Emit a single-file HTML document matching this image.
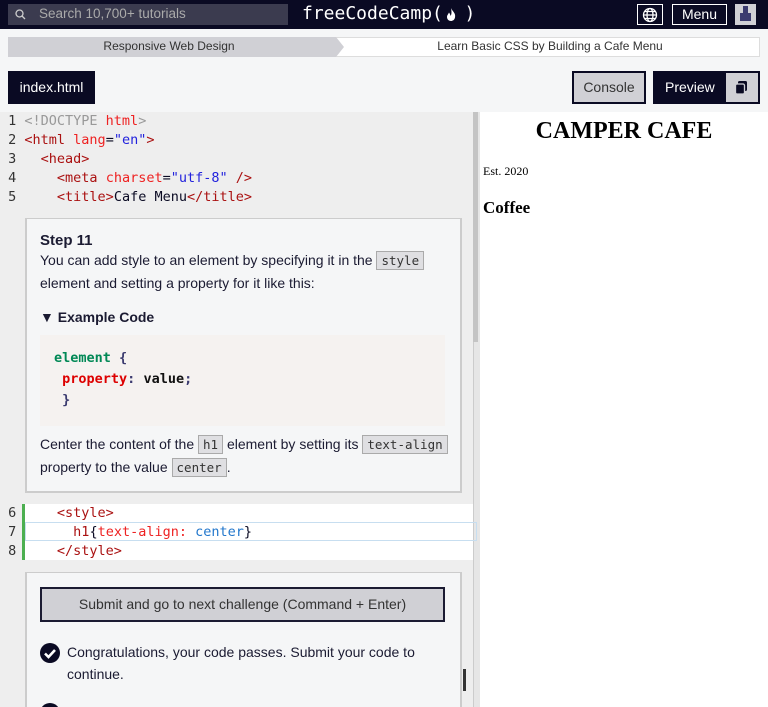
<!DOCTYPE html>
<html style="overflow:hidden;width:768px;height:707px"><head><meta charset="utf-8"><style>
*{box-sizing:border-box;margin:0;padding:0}
body{width:768px;height:707px;overflow:hidden;background:#f5f6f7;font-family:"Liberation Sans",sans-serif;position:relative;color:#0a0a23}
.a{position:absolute}
.mono{font-family:"DejaVu Sans Mono","Liberation Mono",monospace}
.hdr{left:0;top:0;width:768px;height:29px;background:#0a0a23}
.code{font-size:13.5px;line-height:19px;white-space:pre}
.ln{color:#333;}
.t{color:#a11}.at{color:#e22}.s{color:#22d}.g{color:#999}
.ic{font-family:"DejaVu Sans Mono",monospace;font-size:12.5px;background:#dfdfe2;border:1px solid #aaa;padding:1px 4px;color:#333}
.p{font-size:14px;line-height:22px;color:#1b1b32}
</style></head><body>
<div class="a hdr"></div>
<div class="a" style="left:8px;top:4px;width:280px;height:21px;background:#3b3b4f"></div>
<svg class="a" style="left:15px;top:9px" width="11" height="11" viewBox="0 0 11 11"><circle cx="4.5" cy="4.5" r="3.5" stroke="#ccc" stroke-width="1.3" fill="none"/><path d="M7 7l3 3" stroke="#ccc" stroke-width="1.3"/></svg>
<div class="a" style="left:39px;top:6px;font-size:13.5px;color:#aaa">Search 10,700+ tutorials</div>
<div class="a mono" style="left:302px;top:3px;font-size:18px;color:#fff;white-space:pre">freeCodeCamp(  )</div>
<svg class="a" style="left:445px;top:7px" width="12" height="15" viewBox="0 0 12 15"><path d="M6 1C7 4 11 6 10 10.5C9.5 13 7.5 14 6 14C4 14 2 12.5 2 10C2 8 3.5 7 4 5.5C5 7 5.5 8 5.5 9C7 7 6.5 4 6 1Z" fill="#fff"/></svg>
<div class="a" style="left:637px;top:4px;width:26px;height:21px;border:1px solid #fff"></div>
<svg class="a" style="left:642px;top:7px" width="16" height="16" viewBox="0 0 16 16" fill="none" stroke="#fff" stroke-width="1.3"><circle cx="8" cy="8" r="6.5"/><ellipse cx="8" cy="8" rx="3" ry="6.5"/><path d="M1.5 8h13M2.5 4.5h11M2.5 11.5h11"/></svg>
<div class="a" style="left:672px;top:4px;width:55px;height:21px;border:1px solid #fff;color:#fff;font-size:14px;text-align:center;line-height:19px">Menu</div>
<div class="a" style="left:735px;top:4px;width:21px;height:21px;background:#d0d0d5"></div>
<div class="a" style="left:740px;top:13px;width:11px;height:8px;background:#3b3b6f"></div>
<div class="a" style="left:743px;top:6px;width:5px;height:7px;background:#3b3b6f"></div>
<div class="a" style="left:8px;top:37px;width:752px;height:20px;background:#fff;border:1px solid #ddd"></div>
<svg class="a" style="left:8px;top:37px" width="336" height="20"><polygon points="0,0 328,0 336,10 328,20 0,20" fill="#d0d0d5"/></svg>
<div class="a" style="left:8px;top:39px;width:322px;text-align:center;font-size:12px;color:#333">Responsive Web Design</div>
<div class="a" style="left:340px;top:39px;width:420px;text-align:center;font-size:12px;color:#333">Learn Basic CSS by Building a Cafe Menu</div>
<div class="a" style="left:8px;top:71px;width:87px;height:33px;background:#0a0a23;color:#fff;font-size:14px;text-align:center;line-height:33px">index.html</div>
<div class="a" style="left:572px;top:71px;width:74px;height:33px;background:#d0d0d5;border:2px solid #0a0a23;font-size:14px;text-align:center;line-height:29px;color:#333">Console</div>
<div class="a" style="left:653px;top:71px;width:107px;height:33px;background:#0a0a23"></div>
<div class="a" style="left:665px;top:71px;color:#fff;font-size:14px;line-height:33px">Preview</div>
<div class="a" style="left:726px;top:73px;width:32px;height:29px;background:#d0d0d5"></div>
<svg class="a" style="left:734px;top:80px" width="15" height="15" viewBox="0 0 15 15"><rect x="4" y="1" width="9" height="10" rx="1.5" fill="#0a0a23"/><rect x="1.5" y="4" width="9" height="10" rx="1.5" fill="#0a0a23" stroke="#d0d0d5" stroke-width="1.3"/></svg>
<div class="a" style="left:0;top:112px;width:473px;height:595px;background:#eeeeee"></div>
<div class="a" style="left:473px;top:112px;width:7px;height:595px;background:#e6e6e6;border-left:1px solid #ccc"></div>
<div class="a" style="left:473px;top:112px;width:5px;height:230px;background:#c4c4c4"></div>
<div class="a" style="left:480px;top:112px;width:288px;height:595px;background:#fff"></div>
<div class="a" style="left:480px;top:118px;width:288px;text-align:center;font-family:'Liberation Serif',serif;font-weight:bold;font-size:24px;color:#000">CAMPER CAFE</div>
<div class="a" style="left:483px;top:164px;font-family:'Liberation Serif',serif;font-size:12px;color:#000">Est. 2020</div>
<div class="a" style="left:483px;top:198px;font-family:'Liberation Serif',serif;font-weight:bold;font-size:17px;color:#000">Coffee</div>
<div class="a mono code" style="left:0;top:112px"><span class="ln"> 1 </span><span class="g">&lt;!DOCTYPE </span><span class="at">html</span><span class="g">&gt;</span>
<span class="ln"> 2 </span><span class="t">&lt;html </span><span class="at">lang</span>=<span class="s">"en"</span><span class="t">&gt;</span>
<span class="ln"> 3 </span>  <span class="t">&lt;head&gt;</span>
<span class="ln"> 4 </span>    <span class="t">&lt;meta </span><span class="at">charset</span>=<span class="s">"utf-8"</span> <span class="t">/&gt;</span>
<span class="ln"> 5 </span>    <span class="t">&lt;title&gt;</span>Cafe Menu<span class="t">&lt;/title&gt;</span></div>
<div class="a" style="left:25px;top:218px;width:437px;height:275px;background:#f5f6f7;border:1px solid #ccc;border-width:1px 2px 2px 2px"></div>
<div class="a" style="left:40px;top:232px;font-size:15px;font-weight:bold;color:#1b1b32">Step 11</div>
<div class="a p" style="left:40px;top:249px;width:410px">You can add style to an element by specifying it in the <span class="ic">style</span> element and setting a property for it like this:</div>
<div class="a" style="left:40px;top:309px;font-size:14px;font-weight:bold;color:#1b1b32">▼ Example Code</div>
<div class="a" style="left:40px;top:335px;width:405px;height:91px;background:#f5f2f0"></div>
<div class="a mono code" style="left:54px;top:348px;line-height:21px;font-weight:bold;color:#3b3b6f"><span style="color:#085">element</span> {
 <span style="color:#d00">property</span>: <span style="color:#111">value</span>;
 }</div>
<div class="a p" style="left:40px;top:433px;width:410px">Center the content of the <span class="ic">h1</span> element by setting its <span class="ic">text-align</span> property to the value <span class="ic">center</span>.</div>
<div class="a" style="left:22px;top:504px;width:451px;height:56px;background:#fff;border-left:3px solid #4caf50"></div>
<div class="a" style="left:25px;top:522px;width:452px;height:19px;border:1px solid #c7def0"></div>
<div class="a mono code" style="left:0;top:504px"><span class="ln"> 6 </span>    <span class="t">&lt;style&gt;</span>
<span class="ln"> 7 </span>      <span class="t">h1</span>{<span class="at">text-align: </span><span style="color:#27c">center</span>}
<span class="ln"> 8 </span>    <span class="t">&lt;/style&gt;</span></div>
<div class="a" style="left:25px;top:572px;width:437px;height:135px;background:#f5f6f7;border:1px solid #ccc;border-width:1px 2px 0 2px;overflow:hidden">
<div class="a" style="left:13px;top:130px;width:20px;height:20px;border-radius:50%;background:#0a0a23"></div>
</div>
<div class="a" style="left:40px;top:587px;width:405px;height:35px;background:#d0d0d5;border:2px solid #1b1b32;text-align:center;line-height:31px;font-size:14px;color:#333">Submit and go to next challenge (Command + Enter)</div>
<svg class="a" style="left:40px;top:643px" width="20" height="20" viewBox="0 0 20 20"><circle cx="10" cy="10" r="10" fill="#0a0a23"/><path d="M5 10.5l3.5 3.5 6.5-7" stroke="#fff" stroke-width="2.6" fill="none"/></svg>
<div class="a p" style="left:67px;top:641px;width:380px">Congratulations, your code passes. Submit your code to continue.</div>
<div class="a" style="left:463px;top:669px;width:3px;height:22px;background:#333"></div>
</body></html>
